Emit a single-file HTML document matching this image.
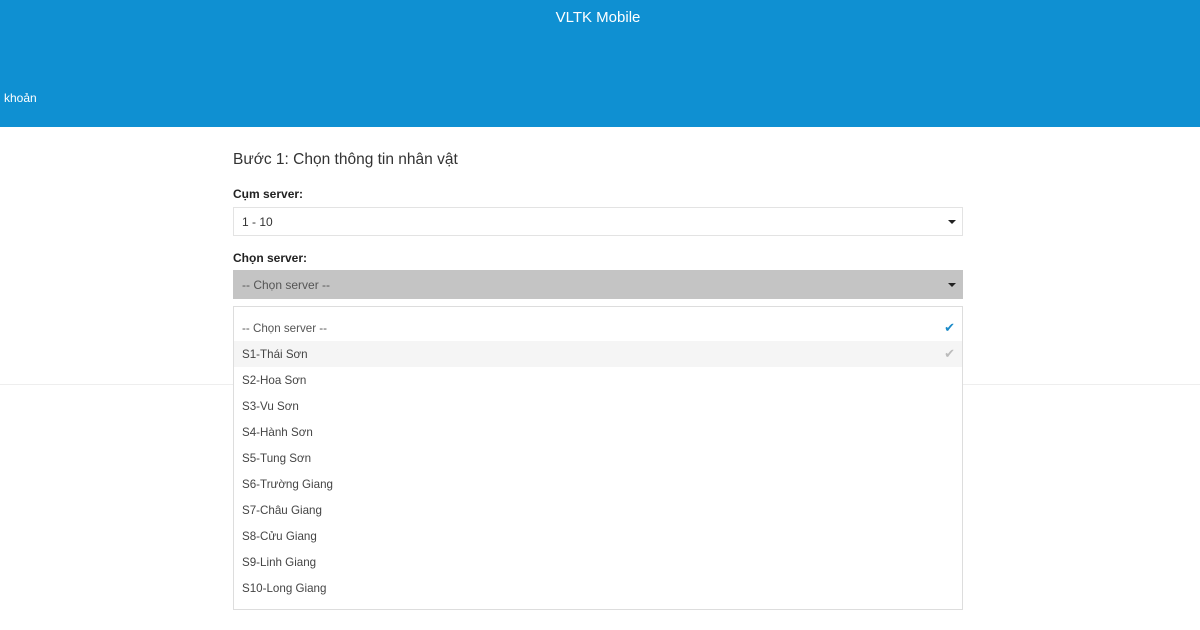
<!DOCTYPE html>
<html><head><meta charset="utf-8"><style>
*{margin:0;padding:0;box-sizing:border-box}
body{width:1200px;height:630px;background:#fff;font-family:"Liberation Sans","DejaVu Sans",sans-serif;position:relative;overflow:hidden;color:#333}
.hdr{position:absolute;left:0;top:0;width:1200px;height:127px;background:#0f90d2;color:#fff}
.t{position:absolute;top:9px;left:0;width:1196px;text-align:center;font-size:15px}
.k{position:absolute;left:4px;top:91px;font-size:12px}
.line{position:absolute;left:0;top:384px;width:1200px;height:1px;background:#eee}
h3{position:absolute;left:233px;top:151px;font-size:15.5px;font-weight:normal;color:#333}
.lbl{position:absolute;left:233px;font-size:12px;font-weight:bold;color:#222}
.sel{position:absolute;left:233px;width:730px;height:29px;border:1px solid #e3e3e3;font-size:12px;padding:7px 8px}
.caret{position:absolute;right:6px;top:12px;width:0;height:0;border-left:4px solid transparent;border-right:4px solid transparent;border-top:4px solid #222}
.dd{position:absolute;left:233px;top:306px;width:730px;height:304px;border:1px solid #ddd;background:#fff}
.it{height:26px;font-size:11.6px;padding:7px 8px;color:#444;position:relative}
.ck{position:absolute;right:7px;top:5px;font-size:13px}
</style></head><body>
<div class="hdr"><div class="t">VLTK Mobile</div><div class="k">khoản</div></div>
<div class="line"></div>
<h3>Bước 1: Chọn thông tin nhân vật</h3>
<div class="lbl" style="top:187px">Cụm server:</div>
<div class="sel" style="top:207px">1 - 10<span class="caret"></span></div>
<div class="lbl" style="top:251px">Chọn server:</div>
<div class="sel" style="top:270px;background:#c4c4c4;border-color:#c4c4c4;color:#555">-- Chọn server --<span class="caret"></span></div>
<div class="dd">
<div style="height:8px"></div>
<div class="it" style="color:#555">-- Chọn server --<span class="ck" style="color:#1a8ac8">✔</span></div>
<div class="it" style="background:#f5f5f5">S1-Thái Sơn<span class="ck" style="color:#bbb">✔</span></div>
<div class="it">S2-Hoa Sơn</div>
<div class="it">S3-Vu Sơn</div>
<div class="it">S4-Hành Sơn</div>
<div class="it">S5-Tung Sơn</div>
<div class="it">S6-Trường Giang</div>
<div class="it">S7-Châu Giang</div>
<div class="it">S8-Cửu Giang</div>
<div class="it">S9-Linh Giang</div>
<div class="it">S10-Long Giang</div>
</div>
</body></html>
